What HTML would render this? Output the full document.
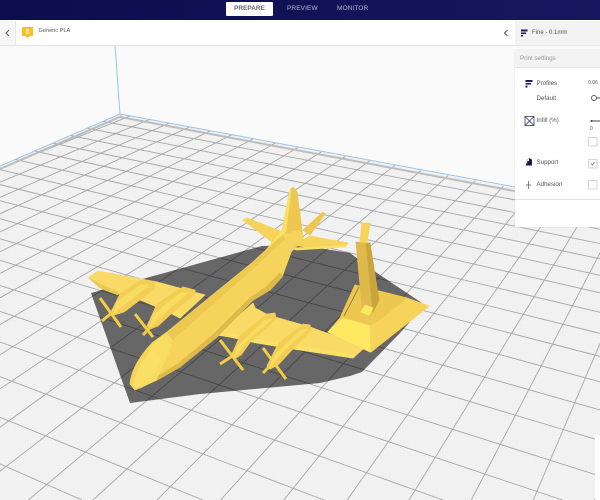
<!DOCTYPE html>
<html>
<head>
<meta charset="utf-8">
<style>
html,body{margin:0;padding:0;width:600px;height:500px;overflow:hidden;background:#fafafa;font-family:"Liberation Sans",sans-serif}
#w{position:fixed;left:0;top:0;width:600px;height:500px;overflow:hidden;filter:blur(.35px)}
.a{position:absolute;white-space:nowrap}
svg{position:absolute;left:0;top:0}
.t{color:#555;font-size:6.2px;line-height:8px}
.m polygon,.m path.s{stroke-linejoin:round;stroke-width:.8}
.a1{fill:#f6d35a;stroke:#f6d35a}
.w1{fill:#f9da66;stroke:#f9da66}
.b1{fill:#fbe068;stroke:#fbe068}
.c1{fill:#edc850;stroke:#edc850}
.d1{fill:#ffe962;stroke:#ffe962}
.e1{fill:#dfba4b;stroke:#dfba4b}
.f1{fill:#c9a63c;stroke:#c9a63c}
.g1{fill:#f2ce55;stroke:#f2ce55}
.h1{fill:#f9dc62;stroke:#f9dc62}
</style>
</head>
<body>
<div id="w">
<svg width="600" height="500" viewBox="0 0 600 500">
<defs>
<clipPath id="bed"><polygon points="120,114 600,204 600,500 0,500 0,166"/></clipPath>
<pattern id="fine" width="2.5" height="2.5" patternUnits="userSpaceOnUse"><rect width="2.5" height="2.5" fill="#f2f2f2"/><rect width="1" height="1" fill="#ececec"/></pattern>
</defs>
<rect width="600" height="500" fill="#fafafa"/>
<polygon points="120,114 600,204 600,500 0,500 0,166" fill="url(#fine)"/>
<g clip-path="url(#bed)" stroke="#a6a6a6" stroke-width="0.9" fill="none">
<path d="M0 101.7L600 216.1M0 111L600 229.3M0 121.1L600 243.6M0 131.9L600 258.8M0 143.5L600 275.3M0 155.9L600 292.8M0 169.7L600 312.3M0 184.6L600 333.4M0 200.8L600 356.4M0 218.8L600 381.8M0 238.8L600 410M0 260.4L600 440.6M0 285.5L600 476.1M0 311.4L562.4 500M0 342L443 500M0 376.7L324 500M0 417.3L202.8 500M0 463.9L82 500"/>
<path d="M600 483.8L594.6 500M600 343.6L533.2 500M600 252.9L471.3 500M600 189.6L409.1 500M600 143.3L347.1 500M600 107L283.7 500M580.8 100L220.6 500M555.8 100L157 500M530.6 100L93 500M505.1 100L28.3 500M479.3 100L0 471.3M454.1 100L0 427.2M428.9 100L0 388.9M403.4 100L0 354.8M377.7 100L0 324.6M352 100L0 297.8M326.2 100L0 273.5M300.5 100L0 251.9M274.5 100L0 232M248.2 100L0 213.8M222 100L0 197.4M195.7 100L0 182.2M169.7 100L0 168.4"/>
<path d="M120 117L600 207M122 116L0 169" stroke="#bcbcbc" stroke-width="2"/>
</g>
<path d="M115 45L120 114L515 187M120 114L0 166" fill="none" stroke="#9cc3ea" stroke-width="1"/>

<!-- shadow -->
<polygon points="91,293 157,275 240,252 262,246 300,245 350,253 377,273 425,305 400,333 362,372 350,376 320,383 200,394 130,403" fill="#6c6c6c" style="mix-blend-mode:multiply"/>

<g class="m">
<!-- far stabilizers & fin -->
<polygon class="a1" points="243,220 247,218 280,231 290,240 272,242"/>
<polygon class="c1" points="303,230 323,212 325,214 310,235"/>
<polygon class="c1" points="257,262 282,230 290,190 293,187 297,192 302,230 303,240 285,258"/>
<polygon class="b1" points="257,262 282,230 290,190 291,190 286,231 264,258"/>
<polygon class="a1" points="293,245 310,236 348,243 345,247 306,247"/>
<polygon class="b1" points="293,248 345,245.500 345,247 296,250"/>

<!-- left wing -->
<polygon class="w1" points="89,277 98,271 157,282 205,295 180,318 172,314 143,301 100,288"/>
<polygon class="c1" points="89,278 100,288 118,295 118,292 102,285"/>
<polygon class="b1" points="160,308 173,314 180,318 184,314 172,308"/>

<!-- right wing -->
<polygon class="w1" points="217,335 253,303 255,308 268,315 310,327 360,345 363,349 353,358 300,350 257,343 230,337"/>
<polygon class="b1" points="217,335 230,337 257,343 300,350 353,358 356,355 300,346 258,340 230,333"/>

<!-- fuselage -->
<path class="a1 s" d="M130 384C131 372 138 358 152 343L167 332L253 262L282 235L300 230L303 238L293 247L282 277L270 290L253 300L217 337L180 367L157 380L135 390Z"/>
<polygon class="c1" points="167,333 253,263 282,236 285,239 240,280 172,340"/>
<polygon class="e1" points="157,380 180,367 217,337 253,300 270,290 282,277 280,273 266,287 250,298 214,334 178,364 156,377"/>
<polygon class="h1" points="152,344 167,333 172,340 170,350 156,380 140,388"/>
<polygon class="b1" points="133,385 140,366 152,350 161,360 150,376 137,388"/>

<!-- props -->
<path d="M100 298L121 327M102 321L120 306M135 314L153 337M143 335L155 322M220 340L243 370M220 364L242 350M263 348L286 379M263 373L283 353" style="stroke:#f3cc42;stroke-width:3;fill:none"/>

<!-- engines -->
<polygon class="g1" points="155,283 143,279 120,294 111,312 114,315 124,312 154,289"/>
<polygon class="h1" points="117,302 141,285 149,285 121,307 114,313"/>
<polygon class="g1" points="195,290 183,287 157,304 147,326 150,329 158,326 172,313 195,294"/>
<polygon class="h1" points="154,314 181,293 188,293 161,316 150,327"/>
<polygon class="g1" points="275,313 267,314 240,336 231,356 234,359 241,355 251,341 276,319"/>
<polygon class="h1" points="238,346 265,320 272,319 246,342 234,357"/>
<polygon class="g1" points="310,325 303,324 278,344 267,366 270,369 278,365 291,351 311,330"/>
<polygon class="h1" points="275,355 301,330 308,329 284,350 270,367"/>

<!-- support base -->
<polygon class="a1" points="328,332 340,318 355,285 407,298 429,306 370,352"/>
<polygon class="c1" points="340,318 355,285 407,298 372,326"/>
<polygon class="d1" points="328,332 343,318 370,326 371,352"/>
<polygon class="a1" points="370,326 410,302 429,306 371,352"/>
<path d="M344 316L359 287" style="stroke:#7d6a30;stroke-width:.8;fill:none"/>
<!-- tower -->
<polygon class="e1" points="356,242 366,243 373,312 362,307"/>
<polygon class="f1" points="366,243 370,243 379,300 373,312"/>
<polygon class="d1" points="365,305 373,308 369,315 361,312"/>
<polygon class="a1" points="362,223 370,223 367,243 360,242"/>
</g>
</svg>

<!-- top bar -->
<div class="a" style="left:0;top:0;width:600px;height:20px;background:linear-gradient(90deg,#0c0d4e,#17175f)"></div>
<div class="a" style="left:226px;top:2px;width:47px;height:14px;background:#fff;border-radius:1px;color:#666;font-size:6.5px;line-height:14px;text-align:center;font-weight:bold">PREPARE</div>
<div class="a" style="left:287px;top:2px;color:#b8b8d0;font-size:6.5px;line-height:14px;letter-spacing:.1px">PREVIEW</div>
<div class="a" style="left:337px;top:2px;color:#b8b8d0;font-size:6.5px;line-height:14px;letter-spacing:.1px">MONITOR</div>

<!-- second bar -->
<div class="a" style="left:0;top:21px;width:600px;height:24px;background:#fff;box-shadow:0 1px 1px #e4e4e4"></div>
<div class="a" style="left:0;top:21px;width:15px;height:24px;background:#f6f6f6;border-right:1px solid #e8e8e8"></div>
<svg style="left:0;top:0" width="600" height="60" viewBox="0 0 600 60">
<path d="M9 30L6 33L9 36M507.500 30L504.500 33L507.500 36" fill="none" stroke="#555" stroke-width="1"/>
<path d="M22 27H33V36H29.500L27.500 38.500L25.500 36H22Z" fill="#fbbf24"/>
<rect x="26" y="29" width="3" height="5" fill="#fde68a"/>
</svg>
<div class="a" style="left:38.500px;top:27px;color:#555;font-size:5.600px;line-height:8px">Generic PLA</div>

<div class="a" style="left:515px;top:21px;width:85px;height:24px;background:#f3f3f3"></div>
<svg style="left:0;top:0" width="600" height="200" viewBox="0 0 600 200">
<path d="M521 29.500H527.500V31.500H521ZM521 32.500H526V34H521ZM521 35H523V36.500H521Z" fill="#1a1a60"/>
</svg>
<div class="a" style="left:532px;top:29px;color:#555;font-size:6px;line-height:8px">Fine - 0.1mm</div>

<!-- panel -->
<div class="a" style="left:515px;top:50px;width:85px;height:177px;background:#fff;box-shadow:0 0 1px #ccc"></div>
<div class="a" style="left:515px;top:50px;width:85px;height:17px;background:#f3f3f3;border-bottom:1px solid #e4e4e4"></div>
<div class="a" style="left:520px;top:55px;color:#999;font-size:6.2px;line-height:8px">Print settings</div>
<div class="a" style="left:515px;top:199px;width:85px;height:1px;background:#e2e2e2"></div>

<svg style="left:0;top:0" width="600" height="240" viewBox="0 0 600 240">
<path d="M525.500 80H532.500V82H525.500ZM525.500 83H531V84.500H525.500ZM525.500 85.500H527.500V87.500H525.500Z" fill="#1a1a60"/>
<circle cx="594" cy="98" r="2.500" fill="#fff" stroke="#555" stroke-width="0.9"/>
<path d="M596.500 98H600" stroke="#555"/>
<rect x="525" y="116.500" width="9" height="9" fill="#fff" stroke="#3a3a70" stroke-width="0.8"/>
<path d="M525 116.500L534 125.500M534 116.500L525 125.500" stroke="#3a3a70" stroke-width="0.8"/>
<path d="M591 121H600" stroke="#444" stroke-width="1"/>
<circle cx="591.500" cy="121" r="1" fill="#333"/>
<rect x="588.500" y="137.500" width="8.500" height="8.500" fill="#fff" stroke="#ccc" stroke-width="0.8"/>
<path d="M525.500 165.500H532V159.500L529 158V161H527.500Z" fill="#1a1a50"/>
<path d="M527 164V160L529 158" fill="none" stroke="#888" stroke-width="0.5"/>
<rect x="588.500" y="159.500" width="8.500" height="8.500" fill="#f8f8f8" stroke="#ccc" stroke-width="0.8"/>
<path d="M591 163.500L592.500 165L594.500 162" fill="none" stroke="#5a7fc0" stroke-width="0.8"/>
<path d="M528.500 181V189M526 185H531" stroke="#777" stroke-width="0.9"/>
<rect x="588.500" y="180.500" width="8.500" height="8.500" fill="#fff" stroke="#ccc" stroke-width="0.8"/>
</svg>

<div class="a t" style="left:536.500px;top:80px">Profiles</div>
<div class="a t" style="left:536.500px;top:95px">Default</div>
<div class="a" style="left:588px;top:79px;color:#555;font-size:5px;line-height:8px">0.06</div>
<div class="a t" style="left:536.500px;top:117px">Infill (%)</div>
<div class="a" style="left:590px;top:125px;color:#555;font-size:5px;line-height:8px">0</div>
<div class="a t" style="left:536.500px;top:159px">Support</div>
<div class="a t" style="left:536.500px;top:181px">Adhesion</div>

<!-- bottom right box -->
<div class="a" style="left:595px;top:435px;width:5px;height:65px;background:#fff"></div>
</div>
</body>
</html>
